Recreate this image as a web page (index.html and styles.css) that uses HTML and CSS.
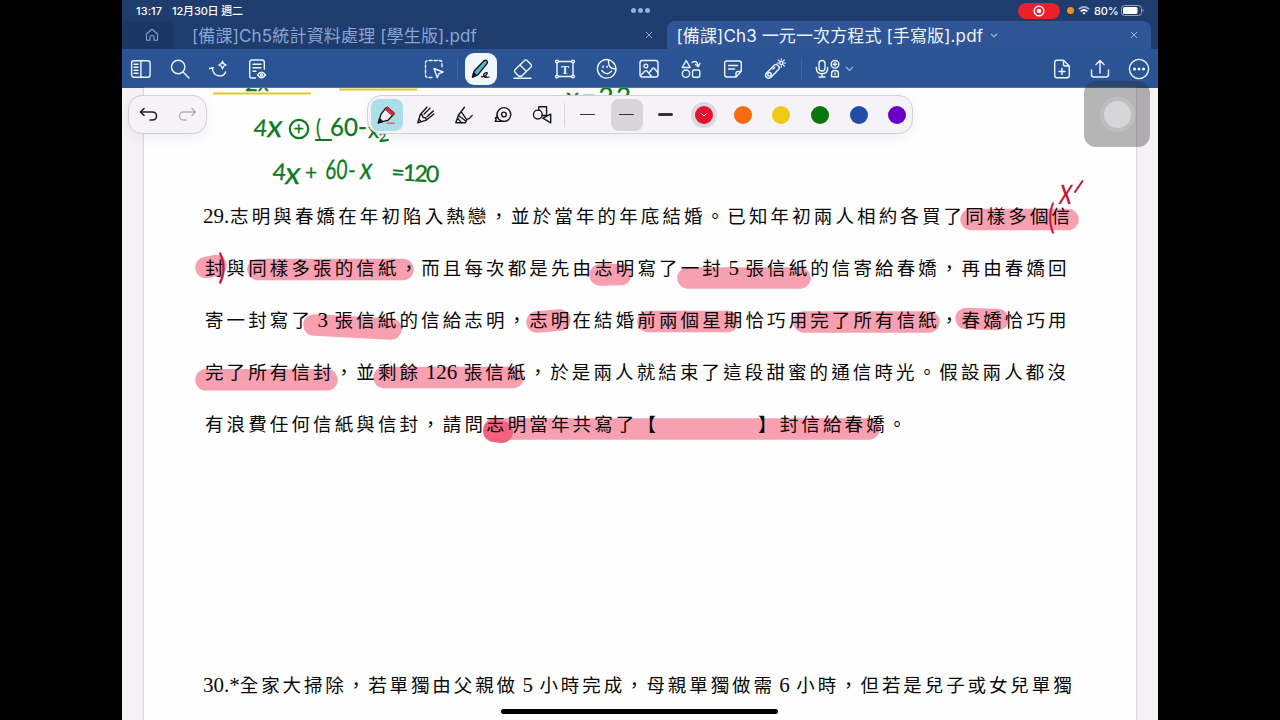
FILE: index.html
```html
<!DOCTYPE html>
<html lang="zh-Hant">
<head>
<meta charset="utf-8">
<title>[備課]Ch3 一元一次方程式</title>
<link rel="stylesheet" href="styles.css">
</head>
<body>
<div class="device">
  <header class="header">
    <div class="status">
      <span class="time">13:17</span><span class="date">12月30日 週二</span>
      <div class="dots"><i></i><i></i><i></i></div>
      <div class="status-right">
        <span class="rec"><svg width="12" height="12" viewBox="0 0 12 12"><circle cx="6" cy="6" r="4.8" fill="none" stroke="#fff" stroke-width="1.4"/><circle cx="6" cy="6" r="2.3" fill="#fff"/></svg></span>
        <span class="mic-dot"></span>
        <svg class="wifi" width="12" height="9" viewBox="0 0 12 9" fill="none" stroke="#fff" stroke-width="1.7"><path d="M.8 3.2Q6-1.2 11.2 3.2" stroke="#9db3d6"/><path d="M2.7 5.4Q6 2.6 9.3 5.4"/><path d="M4.4 6.9Q6 5.6 7.6 6.9L6 8.6z" fill="#fff" stroke="none"/></svg>
        <span class="pct">80%</span>
        <svg width="23" height="11" viewBox="0 0 23 11"><rect x=".5" y=".5" width="20" height="10" rx="3" fill="none" stroke="#8fa5c9"/><rect x="2" y="2" width="14.5" height="7" rx="1.6" fill="#fff"/><path d="M21.6 3.8v3.4q1-.5 1-1.7t-1-1.7" fill="#8fa5c9"/></svg>
      </div>
    </div>
    <div class="tabs">
      <div class="tab home"><svg width="14" height="14" viewBox="0 0 14 14" fill="none" stroke="#8ba3cc" stroke-width="1.1"><path d="M1.5 6L7 1.2 12.500 6v6.300H9V9Q9 7.500 7 7.500T5 9v3.300H1.500z" stroke-linejoin="round"/></svg></div>
      <div class="tab inactive"><span class="tab-name">[備課]Ch5統計資料處理 [學生版].pdf</span><svg class="close" width="8" height="8" viewBox="0 0 8 8"><path d="M1 1l6 6M7 1L1 7" stroke="#8ba3cc"/></svg></div>
      <div class="tab active"><span class="tab-name">[備課]Ch3 一元一次方程式 [手寫版].pdf</span><svg class="chev" width="8" height="5" viewBox="0 0 8 5"><path d="M1 .8l3 3 3-3" fill="none" stroke="#a9bfe3" stroke-width="1.100"/></svg><svg class="close" width="8" height="8" viewBox="0 0 8 8"><path d="M1 1l6 6M7 1L1 7" stroke="#9fb6dc"/></svg></div>
    </div>
    <nav class="tools">
      <svg class="ic" viewBox="0 0 22 22"><rect x="1.600" y="2.700" width="18.500" height="16.500" rx="2.500"/><path d="M10.900 2.700v16.500M4 6.200h4M4 9.200h4M4 12.200h4M4 15.200h4"/></svg>
      <svg class="ic" viewBox="0 0 22 22"><circle cx="9.200" cy="9" r="6.700"/><path d="M14 14l6 6"/></svg>
      <svg class="ic" viewBox="0 0 22 22"><path d="M1.500 10.500l3.800-.8M4.300 10Q5 17 10.500 17.800T17.500 14"/><path stroke-width="1.200" d="M14.500 3.200Q15 6.500 18.300 7 15 7.500 14.500 10.800 14 7.500 10.700 7 14 6.500 14.500 3.200z"/></svg>
      <svg class="ic" viewBox="0 0 22 22"><path d="M8.500 20H5q-2.300 0-2.300-2.300V4.300Q2.700 2 5 2h10q2.300 0 2.300 2.300v7M6 6.200h8M6 9.700h8M6 13.200h3"/><path d="M10.500 17q4-5.500 8 0-4 5.500-8 0z"/><circle cx="14.500" cy="17" r="1"/></svg>
      <svg class="ic lasso" viewBox="0 0 22 22"><path stroke-dasharray="3 2" d="M9 19.500H5q-2.500 0-2.500-2.500V5Q2.500 2.500 5 2.500h11.500q2.500 0 2.500 2.500v4.500"/><path d="M11 10.500l9 3.500-4 1.600-1.700 4.200z"/></svg>
      <i class="sep s1"></i>
      <span class="pen"><svg width="26" height="26" viewBox="0 0 26 26" fill="none" stroke="#111" stroke-width="1.400" stroke-linejoin="round" stroke-linecap="round"><path d="M4.500 21l1.700-6L16 4.800q1.500-1.200 2.800 0t.2 2.800L10 18.600z" fill="#52b9c8"/><path d="M4.500 21l1.200-4 2.600 2.400z" fill="#111"/><path d="M13.500 20.800q4.500-.8 5.500-2.800t-1.500-1.200-1.500 3.200 2.500.8q.5 1 2.500.2" stroke-width="1.300"/></svg></span>
      <svg class="ic first" viewBox="0 0 22 22"><path d="M3 14.200q-1.200-1.300 0-2.500L12.500 2.400q1.200-1 2.500 0l4 4q1 1.200 0 2.500L9.500 18.200H6.800zM8 7l6.500 6.500M2 20.200h17"/></svg>
      <svg class="ic" viewBox="0 0 22 22"><path d="M4.500 3.500h13M4.500 18.500h13M3 5v12M19 5v12"/><circle cx="3" cy="3.500" r="1.400"/><circle cx="19" cy="3.500" r="1.400"/><circle cx="3" cy="18.500" r="1.400"/><circle cx="19" cy="18.500" r="1.400"/><text class="t-icon" x="11" y="15.800" text-anchor="middle">T</text></svg>
      <svg class="ic" viewBox="0 0 22 22"><path d="M12.500 1.700A9.300 9.300 0 1 0 20 10.500M12.500 1.700Q19 4 20 10.500 12 12 12.500 1.700zM5.800 12.500q4.500 6 9.700.7"/><path d="M7 8v1.500M11 8.300v1.200"/></svg>
      <svg class="ic" viewBox="0 0 22 22"><rect x="2" y="2.500" width="18" height="16.500" rx="2.300"/><circle cx="7.800" cy="8" r="1.900"/><path d="M3 17l4-4q1-.8 2 0l4.500 5.500M11 15l3.500-4.500q1-.9 2 0l3.200 4"/></svg>
      <svg class="ic" viewBox="0 0 22 22"><path d="M6.200 2.500l4 7H2.200zM12 4.500q5-3 6 3M15.500 6.500l2.700 2.200L20 5.500"/><circle cx="6" cy="15.700" r="3.700"/><rect x="12.500" y="12" width="7.300" height="7.300" rx="1.500"/></svg>
      <svg class="ic" viewBox="0 0 22 22"><path d="M5 3h12q2.300 0 2.300 2.300v8L14 19H5q-2.300 0-2.300-2.300V5.300Q2.700 3 5 3zM19 13.500h-3q-2 0-2 2V19M6.500 7.500h9M6.500 11h6"/></svg>
      <svg class="ic" viewBox="0 0 22 22"><path d="M2.300 15.200L10.500 7q1.500-1.200 3 0l1.200 1.200q1.200 1.500 0 3L6.700 19.400q-2 1.500-4 0t-.4-4.200z"/><circle cx="5.500" cy="16.300" r="1.800"/><path d="M9 11l1.800-1.800"/><circle cx="17.300" cy="5" r="1.600"/><path stroke-width="1.100" d="M17.300.7v1.500M17.300 7.800v1.500M13 5h1.500M20 5h1.500M14.300 2l1 1M19.300 7l1 1M20.300 2l-1 1"/></svg>
      <i class="sep s2"></i>
      <svg class="mic" width="34" height="22" viewBox="0 0 34 22"><g><rect x="5" y="2.500" width="6" height="10.500" rx="3"/><path d="M2.300 9.500q0 6.200 5.700 6.200t5.700-6.200M8 15.700v3.300M5 19h6"/><circle cx="21" cy="6.300" r="3.800"/><path d="M21 4.500v3.600M19.200 6.300h3.600M17.600 18.700v-3.500q0-2.700 3.400-2.700t3.400 2.700v3.500zM21 15v1.700"/></g></svg>
      <svg class="mchev" width="9" height="6" viewBox="0 0 9 6"><path d="M1 1l3.500 3.500L8 1" fill="none" stroke="#9cb7e0" stroke-width="1.200"/></svg>
      <div class="tools-end">
        <svg class="ic" viewBox="0 0 22 22"><path d="M12.500 2.200H6q-2.300 0-2.300 2.300v13Q3.700 19.800 6 19.800h10q2.300 0 2.300-2.300V8zM12.500 2.200v4q0 1.800 1.800 1.800h4M11 10.500v6M8 13.500h6"/></svg>
        <svg class="ic" viewBox="0 0 22 22"><path d="M2.500 12v4.500q0 2.500 2.500 2.500h12q2.500 0 2.500-2.500V12M11 15V3M7 6.500L11 2.500l4 4"/></svg>
        <svg class="ic" viewBox="0 0 22 22"><circle cx="11" cy="11" r="9.600"/><g fill="#fff" stroke="none"><circle cx="6.500" cy="11" r="1.500"/><circle cx="11" cy="11" r="1.500"/><circle cx="15.500" cy="11" r="1.500"/></g></svg>
      </div>
    </nav>
  </header>

  <main class="canvas">
    <article class="sheet">
      <svg class="marks" viewBox="144 88 992 632" width="992" height="632">
        <g class="hl">
          <path d="M971 219.500H1068M206 267.500L216 265.500M258 269.500H403M600 275L621 274.500M688 278H800M314 325L391 329M537 322L560 320M648 321.500H728M804 322H929M966 318.500L998 319.500M206 379.800H327M384 377.500H513M494 429H869"/>
        </g>
        <path class="hl-dark" d="M494 431L502 432"/>
        <g class="under"><path d="M213 93.500H311M339 89.500H417"/></g>
        <g class="green">
          <circle cx="299" cy="129" r="9.200"/>
          <path d="M316 140H331M381 141L388 140"/>
        </g>
        <g class="green-text">
          <text x="245" y="91" font-size="22">2x</text>
          <text x="566" y="107" font-size="26" textLength="65">x=23</text>
          <text transform="translate(253 136) skewX(-6)" font-size="23">4</text>
          <text transform="translate(266 137) skewX(-8)" font-size="31" textLength="15" lengthAdjust="spacingAndGlyphs">x</text>
          <text x="293.500" y="135" font-size="18">+</text>
          <text transform="translate(316 136) scale(.8 1)" font-size="23">(</text>
          <text x="330" y="136" font-size="25" textLength="37" lengthAdjust="spacingAndGlyphs">60-</text>
          <text x="368" y="138" font-size="22">x</text>
          <text x="379" y="141" font-size="12">2</text>
          <text transform="translate(272 180) skewX(-5)" font-size="23">4</text>
          <text transform="translate(284 184) skewX(-8)" font-size="31" textLength="15" lengthAdjust="spacingAndGlyphs">x</text>
          <text x="305" y="180" font-size="21">+</text>
          <text transform="translate(325 179) skewX(-3)" font-size="27" textLength="22" lengthAdjust="spacingAndGlyphs">60</text>
          <text x="348" y="178" font-size="21">-</text>
          <text transform="translate(359 179) skewX(-8)" font-size="30" textLength="12" lengthAdjust="spacingAndGlyphs">x</text>
          <text transform="translate(391 180) rotate(3)" font-size="23" textLength="48">=120</text>
        </g>
      </svg>
      <div class="problem">
        <p class="first-line"><span class="num">29.</span>志明與春嬌在年初陷入熱戀，並於當年的年底結婚。已知年初兩人相約各買了同樣多個信</p>
        <p>封與同樣多張的信紙，而且每次都是先由志明寫了一封<span class="num in">5</span>張信紙的信寄給春嬌，再由春嬌回</p>
        <p>寄一封寫了<span class="num in">3</span>張信紙的信給志明，志明在結婚前兩個星期恰巧用完了所有信紙，春嬌恰巧用</p>
        <p>完了所有信封，並剩餘<span class="num in">126</span>張信紙，於是兩人就結束了這段甜蜜的通信時光。假設兩人都沒</p>
        <p>有浪費任何信紙與信封，請問志明當年共寫了【<span class="blank"></span>】封信給春嬌。</p>
      </div>
      <div class="problem next">
        <p class="first-line"><span class="num">30.*</span>全家大掃除，若單獨由父親做<span class="num in">5</span>小時完成，母親單獨做需<span class="num in">6</span>小時，但若是兒子或女兒單獨</p>
      </div>
      <svg class="marks" viewBox="144 88 992 632" width="992" height="632">
        <g class="red-text">
          <text transform="translate(1058 204) skewX(-8)" font-size="38" textLength="13" lengthAdjust="spacingAndGlyphs">x</text>
          <text transform="translate(1048 229) scale(.75 1)" font-size="34">(</text>
          <text transform="translate(218 279) scale(.85 1)" font-size="35">)</text>
        </g>
        <path class="red" d="M1082.500 181L1075 192"/>
      </svg>
    </article>
  </main>

  <div class="history">
    <svg width="20" height="16" viewBox="0 0 20 16" fill="none" stroke="#222" stroke-width="1.500"><path d="M5.500 1L1.500 5l4 4M1.500 5H13q4.500 0 4.500 4T13 13h-2.500"/></svg>
    <svg width="20" height="16" viewBox="0 0 20 16" fill="none" stroke="#b4b2b7" stroke-width="1.300"><path d="M14.500 1l4 4-4 4M18.500 5H7Q2.500 5 2.500 9T7 13h2.500"/></svg>
  </div>

  <div class="palette">
    <span class="cell cyan"><svg viewBox="0 0 24 24"><path d="M2.500 20.500L5.500 11l5.500-7 8.500 7-6 6.500z" fill="#ecebef"/><path d="M10 5.500L12.500 3l8 7-2.500 2.500z" fill="#d9243f" stroke="#7d1c2b" stroke-width="1"/><path d="M2.500 20.500L4 16l3.200 3z" fill="#111"/><path d="M12 20.800h8" stroke="#e05060"/></svg></span>
    <span class="cell"><svg viewBox="0 0 24 24"><path d="M3 20.500L5.800 11.500 13 3.500M3 20.500L12.500 17.500l8-6.500M5.800 11.500l2.200.5.800 2.700 2.700.300 1 2.500M10 11L16.500 4.500M13 14l7-6.500M3 20.500l1.200-4 2.500 2.500"/></svg></span>
    <span class="cell"><svg viewBox="0 0 24 24"><path d="M3 20.500L6 12 12.500 3.500M3 20.500h10.500l1.500-3M9 8.500l6 8.500q3-.5 6-4.500M6 12.500l8 6M3 20.500l2-5 4 4.500"/></svg></span>
    <span class="cell"><svg viewBox="0 0 24 24"><circle cx="13" cy="11.500" r="7.500"/><circle cx="13" cy="11.500" r="2.600"/><path d="M13 19H3.500l1-2-1-2H6.500M5.500 12v3"/></svg></span>
    <span class="cell"><svg viewBox="0 0 24 24"><circle cx="7.500" cy="11.500" r="4.800"/><path d="M8.500 6.700V3h8.500v9.500h-5M13 15.500l8.500-4.500v9.500z"/></svg></span>
    <i class="psep"></i>
    <span class="cell"><b class="line thin"></b></span>
    <span class="cell gray"><b class="line mid"></b></span>
    <span class="cell"><b class="line thick"></b></span>
    <span class="cell"><b class="swatch red-sw"><svg width="6" height="4" viewBox="0 0 6 4"><path d="M.7.700L3 3 5.300.700" fill="none" stroke="#fff"/></svg></b></span>
    <span class="cell"><b class="swatch orange"></b></span>
    <span class="cell"><b class="swatch yellow"></b></span>
    <span class="cell"><b class="swatch green-sw"></b></span>
    <span class="cell"><b class="swatch blue"></b></span>
    <span class="cell"><b class="swatch purple"></b></span>
  </div>

  <div class="assist"><span></span></div>
  <div class="home-bar"></div>
</div>
</body>
</html>
```
FILE: styles.css
```css
* { box-sizing: border-box; }
body { margin: 0; background: #000; height: 720px; overflow: hidden; }
.device {
  position: relative; width: 1036px; height: 720px; margin-left: 122px;
  display: flex; flex-direction: column; overflow: hidden; background: #f4f2f7;
  font-family: "Inter", "Noto Sans CJK TC", sans-serif;
}
.header { height: 88px; flex: none; background: #1e3c6e; color: #fff; }
.status { position: relative; height: 21px; display: flex; align-items: center; padding-left: 14px; font-size: 11px; font-weight: 500; }
.time { width: 36px; letter-spacing: .1px; }
.date { letter-spacing: -.15px; margin-top: -2px; }
.dots { position: absolute; left: 509px; top: 8px; display: flex; gap: 2px; }
.dots i { width: 5px; height: 5px; border-radius: 50%; background: #8fb0e6; }
.status-right { margin-left: auto; padding-right: 14px; display: flex; align-items: center; }
.rec { width: 42px; height: 16px; border-radius: 8px; background: #ec1f2d; display: flex; align-items: center; justify-content: center; margin-right: 7px; }
.mic-dot { width: 7px; height: 7px; border-radius: 50%; background: #ef8f1e; margin-right: 4px; }
.wifi { margin-right: 4px; }
.pct { width: 27px; font-size: 11px; letter-spacing: -.1px; }

.tabs { height: 28px; display: flex; }
.tab { display: flex; align-items: center; white-space: nowrap; }
.tab-name { font-size: 17px; line-height: 28px; padding-top: 1px; letter-spacing: .13px; }
.home { width: 52px; padding-left: 23px; background: #1b3764; }
.inactive { width: 493px; padding-left: 18px; color: #8ba5d3; }
.inactive .tab-name { width: 453px; letter-spacing: .16px; }
.active { width: 484px; padding-left: 9.500px; background: #2f5596; border-radius: 8px 8px 0 0; color: #eef4ff; }
.active .tab-name { width: 313px; }
.active .close { margin-left: 132px; }

.tools { height: 39px; display: flex; align-items: center; background: #2a5494; padding-left: 8px; }
.ic, .mic { flex: none; fill: none; stroke: #eef5ff; stroke-width: 1.4; stroke-linejoin: round; stroke-linecap: round; }
.ic { width: 22px; height: 22px; margin-right: 17px; }
.lasso { margin: 0 11px 0 137px; }
.sep { width: 1px; height: 20px; background: #3b66a8; }
.s1 { margin: 0 6.500px 0 1px; }
.pen { width: 32px; height: 32px; border-radius: 9px; background: #f2f7ff; display: flex; align-items: center; justify-content: center; margin-right: 15px; }
.pen ~ .ic { margin-right: 20px; }
.s2 { margin-left: -5px; }
.mic { margin-left: 12px; }
.mchev { margin-left: -3px; }
.tools-end { margin-left: auto; display: flex; gap: 16.5px; padding-right: 8.500px; }
.tools-end .ic { margin: 0; }
.t-icon { font: bold 12px "Liberation Serif", serif; fill: #eef5ff; stroke: none; }

.canvas { flex: 1; padding: 0 22px; }
.sheet { position: relative; height: 632px; padding-top: 101px; background: #fefefe; box-shadow: 0 0 2px #aaa8ad; }
.marks { position: absolute; left: 0; top: 0; }
.hl { fill: none; stroke: #f89fb0; stroke-width: 21.5; stroke-linecap: round; }
.hl-dark { stroke: #f2627f; stroke-width: 22; stroke-linecap: round; }
.under { stroke: #e3c52e; stroke-width: 2.2; }
.green { fill: none; stroke: #0c7a1d; stroke-width: 2.2; stroke-linecap: round; }
.green-text { fill: #0c7a1d; stroke: #0c7a1d; stroke-width: .3; font-family: "Lato", sans-serif; font-weight: 400; }
.red-text { fill: #c5193c; font-family: "Lato", sans-serif; }
.red { stroke: #c5193c; stroke-width: 2; stroke-linecap: round; }
.problem {
  position: relative; padding-left: 61px; color: #090909; white-space: nowrap;
  font-family: "Noto Sans CJK TC", sans-serif; font-size: 18.500px; font-weight: 400; letter-spacing: 3.120px;
}
.problem p { margin: 0; height: 52px; line-height: 52px; }
.problem .first-line { margin-left: -2px; }
.num { font-family: "Liberation Serif", serif; font-size: 21px; letter-spacing: 0; font-weight: 400; }
.in { margin: 0 6.500px 0 4.500px; }
.first-line .num:first-child { margin-right: .8px; }
.blank { display: inline-block; width: 99px; }
.next { margin-top: 209px; letter-spacing: 2.900px; }
.next .num:first-child { margin-right: 0; }

.history, .palette { position: absolute; background: #f5f3f7; border: 1px solid #d3cfd6; box-shadow: 0 4px 14px rgba(0,0,0,.06); display: flex; align-items: center; }
.history { left: 6px; top: 95px; width: 79px; height: 39px; border-radius: 14px; padding: 1px 0 0 10px; gap: 18px; }
.palette { left: 245px; top: 95px; width: 546px; height: 39px; border-radius: 14px; padding-left: 3px; gap: 6.700px; }
.cell { flex: none; width: 32px; height: 32px; border-radius: 8px; display: flex; align-items: center; justify-content: center; }
.cell > svg { width: 22px; height: 22px; fill: none; stroke: #161616; stroke-width: 1.500; stroke-linejoin: round; stroke-linecap: round; }
.cyan { background: #a9dfe6; }
.gray { background: #d8d6db; }
.psep { flex: none; width: 1px; height: 24px; background: #dad7dd; margin: 0 -.3px 0 0; }
.line { width: 15px; background: #333; border-radius: 2px; }
.thin { height: 1px; }
.mid { height: 1.500px; }
.thick { height: 3px; }
.swatch { width: 18px; height: 18px; border-radius: 50%; display: flex; align-items: center; justify-content: center; }
.red-sw { background: #e0142f; box-shadow: 0 0 0 4px #dcd8dd; }
.orange { background: #f66a10; }
.yellow { background: #efca14; }
.green-sw { background: #0b750f; }
.blue { background: #234da5; }
.purple { background: #6a00c8; }
.assist { position: absolute; left: 962px; top: 81px; width: 66px; height: 66px; border-radius: 12px; background: rgba(40,40,42,.34); display: flex; align-items: center; justify-content: center; }
.assist span { width: 27px; height: 27px; border-radius: 50%; background: #d6d5d7; box-shadow: 0 0 0 4px rgba(255,255,255,.14); }
.home-bar { position: absolute; left: 379px; top: 709px; width: 277px; height: 4.500px; border-radius: 3px; background: #000; }
```
